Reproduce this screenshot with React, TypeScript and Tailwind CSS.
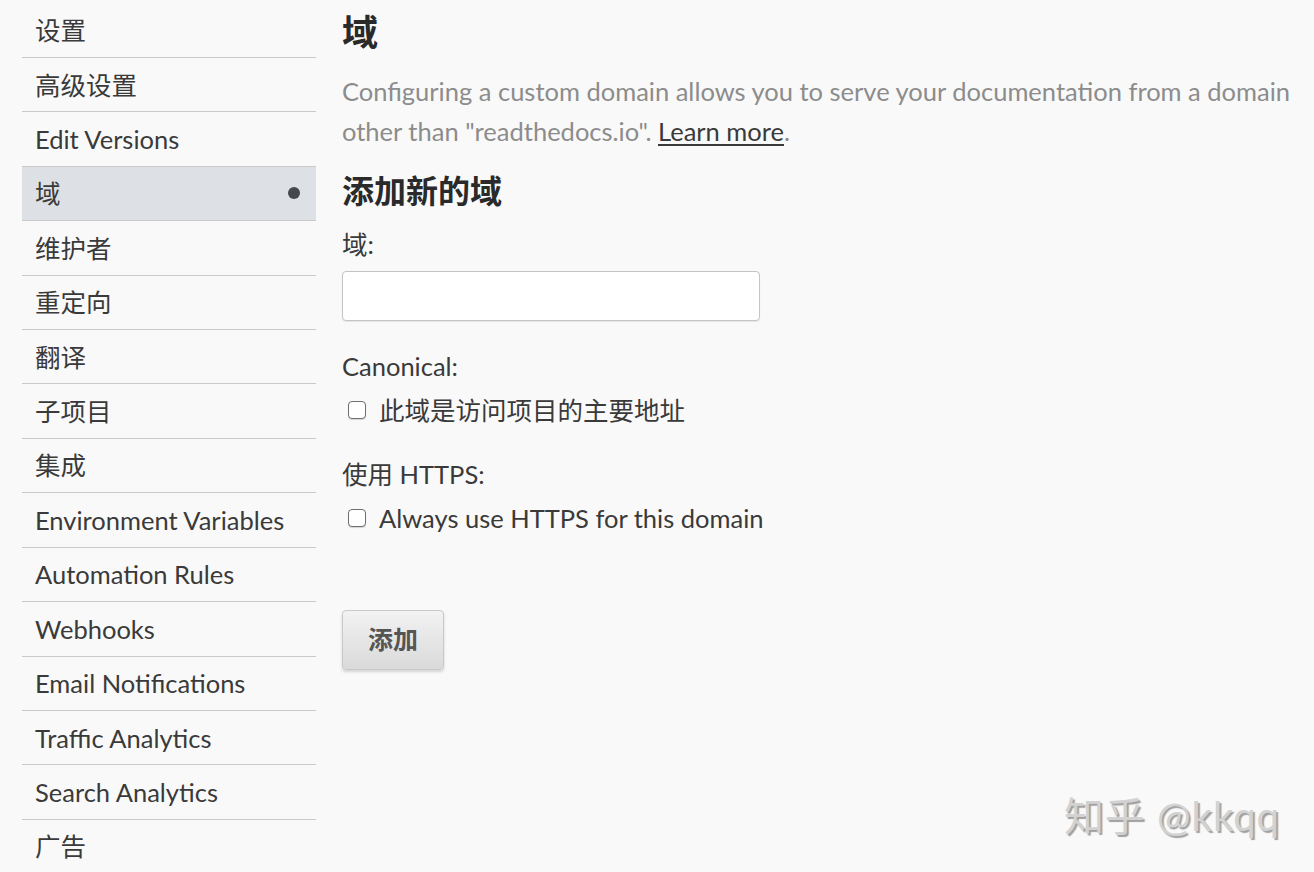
const items = [
  '设置',
  '高级设置',
  'Edit Versions',
  '域',
  '维护者',
  '重定向',
  '翻译',
  '子项目',
  '集成',
  'Environment Variables',
  'Automation Rules',
  'Webhooks',
  'Email Notifications',
  'Traffic Analytics',
  'Search Analytics',
  '广告',
]

function Checkbox() {
  return (
    <span className="mr-[13px] inline-block h-[18px] w-[18px] shrink-0 rounded-[4px] border border-[#6f6f6f] bg-white shadow-[0_1px_1px_rgba(0,0,0,0.15)]" />
  )
}

export default function App() {
  return (
    <div
      className="relative flex h-[872px] w-[1314px] overflow-hidden bg-[#f9f9f9] text-[#3a3a3a]"
      style={{ fontFamily: 'Lato, "Noto Sans CJK SC", sans-serif' }}
    >
      <ul className="ml-[22px] w-[294px] shrink-0 pt-[3.5px]">
        {items.map((it, i) => (
          <li
            key={it}
            className={
              'flex h-[54.43px] items-center justify-between border-b border-[#c9c9c9] pl-[13px] pr-[16px] text-[25.5px] ' +
              (i === 3 ? 'bg-[#dde1e6]' : '')
            }
          >
            <span>{it}</span>
            {i === 3 && <span className="h-[12px] w-[12px] rounded-full bg-[#45484c]" />}
          </li>
        ))}
      </ul>

      <main className="ml-[26px] w-[960px]">
        <h1 className="mt-[8px] text-[36px] leading-[48px] font-bold text-[#2a2a2a]">域</h1>
        <p className="mt-[15px] text-[25.5px] leading-[40px] text-[#8c8c8c]">
          Configuring a custom domain allows you to serve your documentation from a domain other than
          "readthedocs.io". <a className="text-[#3a3a3a] underline underline-offset-[3px]">Learn more</a>.
        </p>
        <h2 className="mt-[20px] text-[32px] leading-[40px] font-bold text-[#2a2a2a]">添加新的域</h2>

        <div className="mt-[17px] text-[25.5px] leading-[32px]">域:</div>
        <input className="mt-[11px] block h-[50px] w-[418px] rounded-[4px] border border-[#c4c4c4] bg-white shadow-[0_1px_1px_rgba(0,0,0,0.08)]" />

        <div className="mt-[29px] text-[25.5px] leading-[32px]">Canonical:</div>
        <label className="mt-[12px] flex items-center pl-[6px] text-[25.5px] leading-[32px]">
          <Checkbox />
          此域是访问项目的主要地址
        </label>

        <div className="mt-[32px] text-[25.5px] leading-[32px]">使用 HTTPS:</div>
        <label className="mt-[12px] flex items-center pl-[6px] text-[25.5px] leading-[32px]">
          <Checkbox />
          Always use HTTPS for this domain
        </label>

        <button className="mt-[76px] h-[60px] w-[102px] rounded-[4px] border border-[#c9c9c9] bg-gradient-to-b from-[#f2f2f2] to-[#dadada] text-[25px] font-bold text-[#555] shadow-[0_2px_3px_rgba(0,0,0,0.15)]">
          添加
        </button>
      </main>

      <div className="absolute right-[34px] bottom-[36px] text-[40px] leading-none tracking-[1px] text-[#d2d2d2] [text-shadow:2px_2px_1px_#a0a0a0]">
        知乎 @kkqq
      </div>
    </div>
  )
}
